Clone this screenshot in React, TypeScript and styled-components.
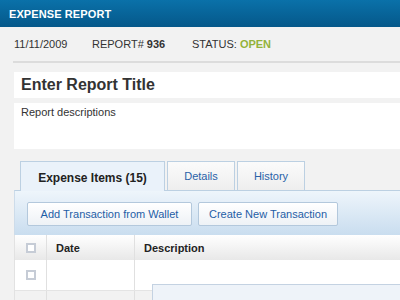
import styled, { createGlobalStyle } from "styled-components";

const GlobalStyle = createGlobalStyle`
  html, body {
    margin: 0;
    padding: 0;
    background: #f2f2f2;
    font-family: "Liberation Sans", Arial, sans-serif;
    overflow: hidden;
  }
`;

const tabs = [
  { label: "Expense Items (15)", active: true, width: 145 },
  { label: "Details", active: false, width: 68 },
  { label: "History", active: false, width: 68 },
];

export default function App() {
  return (
    <Page>
      <GlobalStyle />
      <TopBar>EXPENSE REPORT</TopBar>
      <Main>
        <InfoRow>
          <InfoItem>11/11/2009</InfoItem>
          <InfoItem>
            REPORT# <b>936</b>
          </InfoItem>
          <InfoItem>
            STATUS: <Status>OPEN</Status>
          </InfoItem>
        </InfoRow>
        <TitleBox>Enter Report Title</TitleBox>
        <DescBox>Report descriptions</DescBox>

        <Tabs>
          {tabs.map((t) => (
            <Tab key={t.label} $active={t.active} $width={t.width}>
              {t.label}
            </Tab>
          ))}
        </Tabs>
        <Toolbar>
          <ToolButton $width={165}>Add Transaction from Wallet</ToolButton>
          <ToolButton $width={140}>Create New Transaction</ToolButton>
        </Toolbar>

        <Table>
          <HeadRow>
            <CheckCell>
              <Check />
            </CheckCell>
            <DateCell>Date</DateCell>
            <DescCell>Description</DescCell>
          </HeadRow>
          <Row $alt={false}>
            <CheckCell>
              <Check />
            </CheckCell>
            <DateCell />
            <DescCell />
          </Row>
          <Row $alt>
            <CheckCell />
            <DateCell />
            <DescCell />
          </Row>
          <Popup />
        </Table>
      </Main>
    </Page>
  );
}

const Page = styled.div`
  width: 400px;
  height: 300px;
  overflow: hidden;
`;

const TopBar = styled.div`
  height: 27px;
  display: flex;
  align-items: center;
  padding-left: 9px;
  background: linear-gradient(#0a71a9, #05588a);
  color: #fff;
  font-size: 11px;
  font-weight: bold;
  letter-spacing: 0.1px;
`;

const Main = styled.div`
  padding-left: 14px;
`;

const InfoRow = styled.div`
  height: 34px;
  display: flex;
  align-items: center;
  padding-left: 1px;
  border-bottom: 2px solid #dcdcdc;
  margin-left: -1px;
  font-size: 11px;
  color: #333;
`;

const InfoItem = styled.div`
  &:nth-child(1) {
    width: 78px;
  }
  &:nth-child(2) {
    width: 100px;
  }
  b {
    font-weight: bold;
  }
`;

const Status = styled.span`
  color: #93b23a;
  font-weight: bold;
`;

const TitleBox = styled.div`
  margin-top: 9px;
  height: 26px;
  background: #fff;
  display: flex;
  align-items: center;
  padding-left: 7px;
  font-size: 16px;
  font-weight: bold;
  color: #333;
`;

const DescBox = styled.div`
  margin-top: 5px;
  height: 46px;
  background: #fff;
  padding: 3px 7px;
  box-sizing: border-box;
  font-size: 11px;
  color: #333;
`;

const Tabs = styled.div`
  margin-top: 11px;
  padding-left: 6px;
  display: flex;
  align-items: flex-end;
  gap: 2px;
  height: 30px;
`;

const Tab = styled.div<{ $active: boolean; $width: number }>`
  width: ${(p) => p.$width}px;
  height: ${(p) => (p.$active ? 30 : 29)}px;
  box-sizing: border-box;
  display: flex;
  align-items: center;
  justify-content: center;
  border: 1px solid #bcd0e2;
  border-bottom: none;
  background: ${(p) => (p.$active ? "#eaf2fa" : "linear-gradient(#fbfbfb, #eeeeee)")};
  color: ${(p) => (p.$active ? "#222" : "#2a62a8")};
  font-size: ${(p) => (p.$active ? 12 : 11)}px;
  font-weight: ${(p) => (p.$active ? "bold" : "normal")};
  padding-top: ${(p) => (p.$active ? 3 : 0)}px;
  margin-bottom: ${(p) => (p.$active ? -1 : 0)}px;
  position: relative;
  z-index: ${(p) => (p.$active ? 1 : 0)};
`;

const Toolbar = styled.div`
  height: 45px;
  box-sizing: border-box;
  display: flex;
  align-items: center;
  gap: 6px;
  padding-left: 12px;
  padding-top: 1px;
  border-top: 1px solid #bcd0e2;
  border-left: 1px solid #cddcea;
  background: linear-gradient(#eef5fb, #c9ddef);
`;

const ToolButton = styled.div<{ $width: number }>`
  width: ${(p) => p.$width}px;
  height: 24px;
  box-sizing: border-box;
  display: flex;
  align-items: center;
  justify-content: center;
  border: 1px solid #b3c8dc;
  border-radius: 2px;
  background: linear-gradient(#ffffff, #eef2f6);
  color: #1f5ea6;
  font-size: 11px;
`;

const Table = styled.div`
  position: relative;
  border-left: 1px solid #e2e2e2;
`;

const HeadRow = styled.div`
  height: 25px;
  display: flex;
  background: linear-gradient(#ffffff, #e8e8e8);
  font-size: 11px;
  font-weight: bold;
  color: #222;
`;

const Row = styled.div<{ $alt: boolean }>`
  height: ${(p) => (p.$alt ? 20 : 30)}px;
  display: flex;
  background: ${(p) => (p.$alt ? "#f2f2f2" : "#fff")};
  border-top: ${(p) => (p.$alt ? "1px solid #e4e4e4" : "none")};
`;

const CheckCell = styled.div`
  width: 31px;
  display: flex;
  align-items: center;
  justify-content: center;
  border-right: 1px solid #e0e0e0;
`;

const DateCell = styled.div`
  width: 88px;
  display: flex;
  align-items: center;
  padding-left: 9px;
  box-sizing: border-box;
  border-right: 1px solid #e0e0e0;
`;

const DescCell = styled.div`
  flex: 1;
  display: flex;
  align-items: center;
  padding-left: 9px;
`;

const Check = styled.div`
  width: 10px;
  height: 10px;
  box-sizing: border-box;
  border: 2px solid #c6ccd6;
  background: #fff;
`;

const Popup = styled.div`
  position: absolute;
  left: 137px;
  top: 49px;
  width: 300px;
  height: 60px;
  background: #eef3f9;
  border: 1px solid #c4d2e2;
`;
